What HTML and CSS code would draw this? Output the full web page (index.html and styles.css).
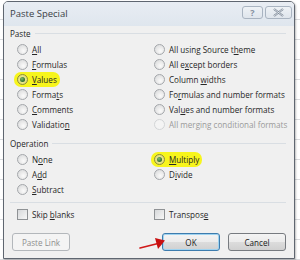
FILE: index.html
```html
<!DOCTYPE html>
<html>
<head>
<meta charset="utf-8">
<link rel="stylesheet" href="styles.css">
</head>
<body>
<div class="dialog">
  <div class="titlebar">
    <span class="title">Paste Special</span>
    <div class="tbtns">
      <span class="tbtn help">?</span>
      <span class="tbtn close"><svg width="11" height="9" viewBox="0 0 11 9"><path d="M1 1 L10 8 M10 1 L1 8" stroke="#7d8896" stroke-width="2.2" fill="none"/><path d="M1 1 L10 8 M10 1 L1 8" stroke="#e9eef3" stroke-width="0.8" fill="none"/></svg></span>
    </div>
  </div>
  <div class="client">
    <div class="group-label"><span>Paste</span></div>
    <div class="opts">
      <label class="opt"><span class="radio"></span><span><u>A</u>ll</span></label>
      <label class="opt"><span class="radio"></span><span>All using Source t<u>h</u>eme</span></label>
      <label class="opt"><span class="radio"></span><span><u>F</u>ormulas</span></label>
      <label class="opt"><span class="radio"></span><span>All e<u>x</u>cept borders</span></label>
      <label class="opt"><span class="hl hl-values"><span class="radio checked"></span><span><u>V</u>alues</span></span></label>
      <label class="opt"><span class="radio"></span><span>Column <u>w</u>idths</span></label>
      <label class="opt"><span class="radio"></span><span>Forma<u>t</u>s</span></label>
      <label class="opt"><span class="radio"></span><span>Fo<u>r</u>mulas and number formats</span></label>
      <label class="opt"><span class="radio"></span><span><u>C</u>omments</span></label>
      <label class="opt"><span class="radio"></span><span>Val<u>u</u>es and number formats</span></label>
      <label class="opt"><span class="radio"></span><span>Validatio<u>n</u></span></label>
      <label class="opt disabled"><span class="radio"></span><span>All merging conditional formats</span></label>
    </div>
    <div class="group-label op"><span>Operation</span></div>
    <div class="opts">
      <label class="opt"><span class="radio"></span><span>N<u>o</u>ne</span></label>
      <label class="opt"><span class="hl hl-mult"><span class="radio checked"></span><span><u>M</u>ultiply</span></span></label>
      <label class="opt"><span class="radio"></span><span>A<u>d</u>d</span></label>
      <label class="opt"><span class="radio"></span><span>D<u>i</u>vide</span></label>
      <label class="opt"><span class="radio"></span><span><u>S</u>ubtract</span></label>
    </div>
    <div class="sep"></div>
    <div class="opts checks">
      <label class="opt"><span class="check"></span><span>Skip <u>b</u>lanks</span></label>
      <label class="opt"><span class="check"></span><span>Transpos<u>e</u></span></label>
    </div>
    <div class="buttons">
      <span class="btn disabled">Paste Link</span>
      <div class="btn-group">
        <span class="btn default">OK</span>
        <span class="btn">Cancel</span>
      </div>
    </div>
  </div>
</div>
<svg class="arrow" width="30" height="18" viewBox="0 0 30 18">
  <path d="M2 13 L20 8.5" stroke="#d01818" stroke-width="1.6" fill="none" stroke-linecap="round"/>
  <path d="M17 3 L27 5.5 L20 14 Z" fill="#c81010"/>
</svg>
</body>
</html>
```
FILE: styles.css
```css
html, body {
  margin: 0;
  padding: 0;
}
body {
  width: 300px;
  height: 260px;
  position: relative;
  overflow: hidden;
  background-color: #ffffff;
  background-image: repeating-linear-gradient(to bottom, transparent 0, transparent 19px, #dadcdf 19px, #dadcdf 20px);
  font-family: "Open Sans", "Noto Sans", sans-serif;
  font-size: 8.1px;
  color: #262626;
}
.dialog {
  position: relative;
  margin: 1px 0 0 3px;
  width: 292px;
  height: 258px;
  box-sizing: border-box;
  border: 1px solid #5f6670;
  border-radius: 5px 5px 0 0;
  background: #f0f0f0;
  display: flex;
  flex-direction: column;
  box-shadow: 1px 1px 2px rgba(0,0,0,0.25);
}
.titlebar {
  height: 24px;
  flex: none;
  display: flex;
  align-items: flex-start;
  justify-content: space-between;
  background: linear-gradient(to bottom, #e8edf3, #dfe6ee);
  border-radius: 4px 4px 0 0;
}
.title {
  margin: 5px 0 0 6px;
  font-size: 9.5px;
  color: #3a3f46;
}
.tbtns {
  display: flex;
  gap: 2px;
  margin: 4px 2px 0 0;
}
.tbtn {
  height: 13px;
  box-sizing: border-box;
  border: 1px solid #a9b4c1;
  border-radius: 3px;
  background: linear-gradient(to bottom, #eef2f6, #dfe5ec);
  display: flex;
  align-items: center;
  justify-content: center;
}
.help {
  width: 21px;
  font-size: 9px;
  font-weight: bold;
  color: #8591a0;
  line-height: 1;
}
.close {
  width: 27px;
}
.client {
  flex: 1;
  padding: 1px 8px 7px 6px;
  display: flex;
  flex-direction: column;
}
.group-label {
  height: 12px;
  display: flex;
  align-items: center;
  gap: 4px;
}
.group-label::after {
  content: "";
  flex: 1;
  height: 1px;
  background: #d9dee3;
}
.group-label.op {
  margin-top: 5px;
}
.opts {
  margin: 3px 0 0 7px;
  display: grid;
  grid-template-columns: 137px 1fr;
  grid-auto-rows: 15px;
}
.opt {
  display: flex;
  align-items: center;
  gap: 4px;
  white-space: nowrap;
}
.opt u {
  text-decoration-thickness: 1px;
  text-underline-offset: 1px;
}
.radio {
  width: 11px;
  height: 11px;
  box-sizing: border-box;
  border-radius: 50%;
  border: 1px solid #a4a7ab;
  background: radial-gradient(circle at 60% 65%, #fbfbfb 0, #eaeaea 45%, #d4d6d8 100%);
  flex: none;
  position: relative;
}
.radio.checked::after {
  content: "";
  position: absolute;
  left: 2px;
  top: 2px;
  width: 5px;
  height: 5px;
  border-radius: 50%;
  background: radial-gradient(circle at 40% 35%, #7dbb6e 0, #2f6b2c 70%, #24501f 100%);
}
.hl {
  display: flex;
  align-items: center;
  gap: 4px;
  background: #f7f51c;
  border-radius: 7px;
  padding: 2px 3px;
  margin: -2px -3px;
}
.hl .radio {
  border-color: #8d8c3a;
  background: radial-gradient(circle, #f2f0a0 0, #dcd96a 100%);
}
.disabled {
  color: #9a9a9a;
}
.disabled .radio {
  border-color: #d3d5d7;
  background: #f4f4f4;
}
.sep {
  margin-top: 5px;
  height: 1px;
  background: #d9dee3;
}
.checks {
  margin-top: 4px;
}
.check {
  width: 11px;
  height: 11px;
  box-sizing: border-box;
  border: 1px solid #8f9295;
  background: linear-gradient(135deg, #d6d8da, #f7f7f7);
  flex: none;
}
.buttons {
  margin-top: 11px;
  display: flex;
  justify-content: space-between;
  padding-left: 2px;
}
.btn-group {
  display: flex;
  gap: 8px;
}
.btn {
  width: 58px;
  height: 18px;
  box-sizing: border-box;
  border: 1px solid #777b80;
  border-radius: 3px;
  background: linear-gradient(to bottom, #f4f4f4 0, #ebebeb 50%, #dcdcdc 51%, #d0d0d0 100%);
  display: flex;
  align-items: center;
  justify-content: center;
  color: #1a1a1a;
}
.btn.default {
  border-color: #3d7cae;
  box-shadow: inset 0 0 0 1px #9fd3f0;
}
.btn.disabled {
  border-color: #b3b7bb;
  background: #f4f4f4;
  color: #8e8e8e;
}
.arrow {
  position: absolute;
  left: 138px;
  top: 235px;
}
```
